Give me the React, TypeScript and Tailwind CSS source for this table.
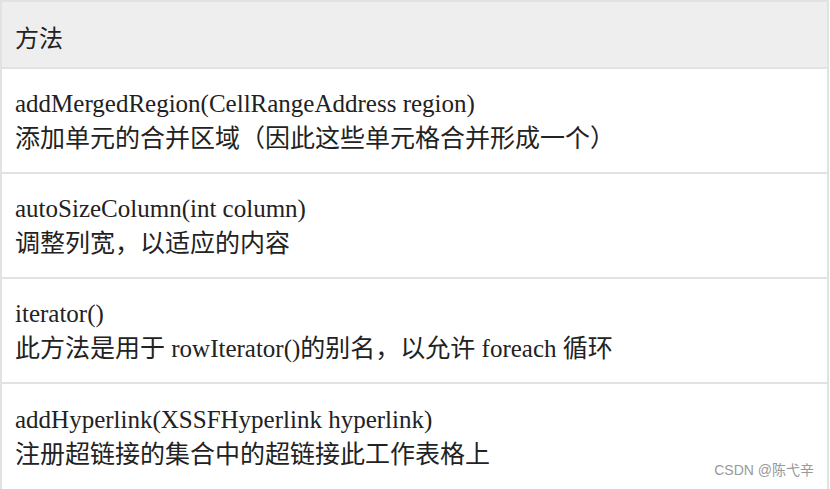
const rows = [
  { method: "addMergedRegion(CellRangeAddress region)", desc: "添加单元的合并区域（因此这些单元格合并形成一个）" },
  { method: "autoSizeColumn(int column)", desc: "调整列宽，以适应的内容" },
  { method: "iterator()", desc: "此方法是用于 rowIterator()的别名，以允许 foreach 循环" },
  { method: "addHyperlink(XSSFHyperlink hyperlink)", desc: "注册超链接的集合中的超链接此工作表格上" },
];

export default function App() {
  return (
    <div className="relative w-[830px] h-[489px] overflow-hidden bg-white font-['Liberation_Serif','Noto_Sans_CJK_SC',serif] text-[#222]">
      <div className="w-[829px] border-t-2 border-x-2 border-[#e2e2e2]">
        {/* Header */}
        <div className="h-[67px] bg-[#eeeeee] flex items-center pl-[13px] pt-[9px] text-[24px] border-b-2 border-[#e2e2e2]">
          方法
        </div>
        {rows.map((row, i) => (
          <div
            key={row.method}
            className={`h-[105px] flex flex-col justify-center pl-[13px] text-[25px] leading-[35px] ${
              i < rows.length - 1 ? "border-b-2 border-[#e2e2e2]" : ""
            }`}
          >
            <div>{row.method}</div>
            <div>{row.desc}</div>
          </div>
        ))}
      </div>

      {/* Watermark */}
      <div className="absolute right-[16px] bottom-[8px] text-[14px] text-[#999] font-['Liberation_Sans','Noto_Sans_CJK_SC',sans-serif]">
        CSDN @陈弋辛
      </div>
    </div>
  );
}
